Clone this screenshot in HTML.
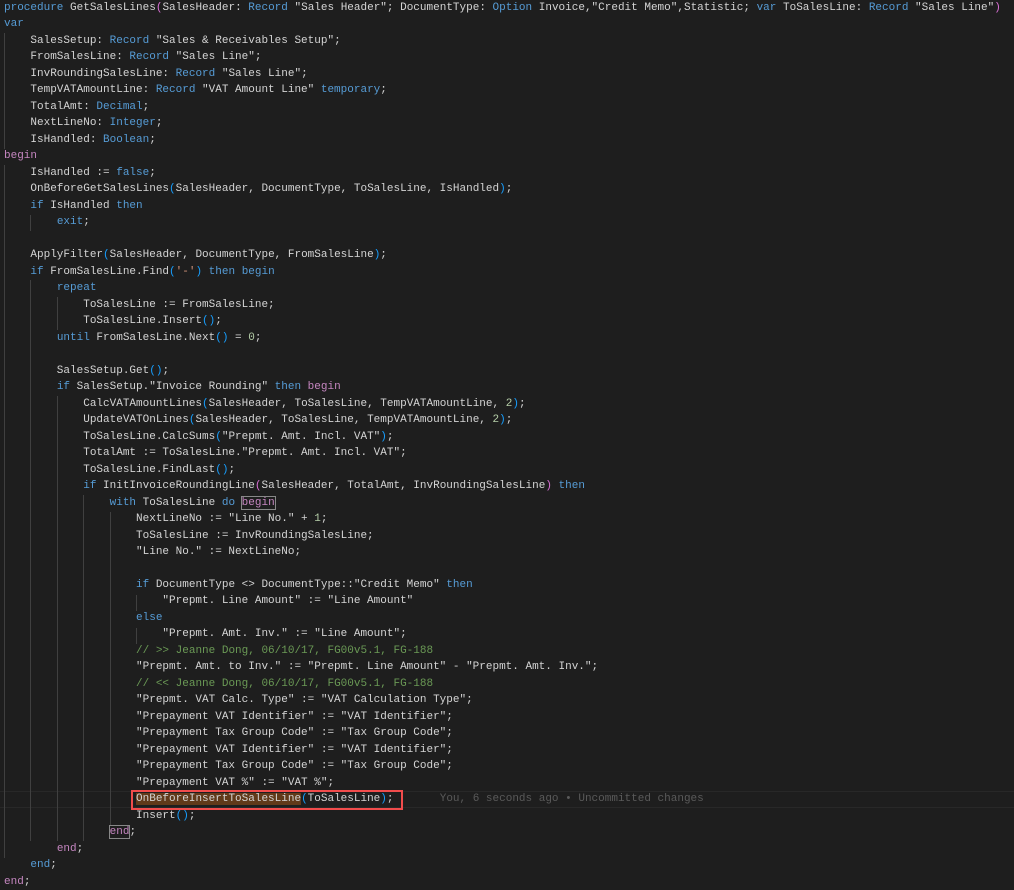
<!DOCTYPE html>
<html><head><meta charset="utf-8"><style>
html,body{margin:0;padding:0;background:#1e1e1e;width:1014px;height:890px;overflow:hidden}
pre{margin:0;position:absolute;left:4px;top:0;font-family:"Liberation Mono",monospace;font-size:11px;line-height:16.49px;color:#d4d4d4;white-space:pre}
.k{color:#569cd6}.p{color:#c586c0}.s{color:#ce9178}.n{color:#b5cea8}.c{color:#6a9955}.b{color:#179fff}.m{color:#da70d6}
.g{position:absolute;width:1px;background:#404040}
.cur{position:absolute;left:0;width:1014px;top:791px;height:17px;border-top:1px solid #282828;border-bottom:1px solid #282828;box-sizing:border-box}
.blame{color:#5a5a5a}
.hl{background:#613a1a}
.box{position:absolute;left:131px;top:790px;width:272px;height:20px;border:2px solid #f14c4c;box-sizing:border-box}
.bm{outline:1px solid #888}
</style></head><body>
<div class="cur"></div>
<div class="g" style="left:4px;top:33px;height:116px"></div>
<div class="g" style="left:4px;top:165px;height:693px"></div>
<div class="g" style="left:30px;top:215px;height:16px"></div>
<div class="g" style="left:30px;top:280px;height:561px"></div>
<div class="g" style="left:57px;top:297px;height:33px"></div>
<div class="g" style="left:57px;top:396px;height:445px"></div>
<div class="g" style="left:83px;top:495px;height:346px"></div>
<div class="g" style="left:110px;top:512px;height:313px"></div>
<div class="g" style="left:136px;top:595px;height:16px"></div>
<div class="g" style="left:136px;top:628px;height:16px"></div>
<pre><span class="k">procedure</span> GetSalesLines<span class="m">(</span>SalesHeader: <span class="k">Record</span> "Sales Header"; DocumentType: <span class="k">Option</span> Invoice,"Credit Memo",Statistic; <span class="k">var</span> ToSalesLine: <span class="k">Record</span> "Sales Line"<span class="m">)</span>
<span class="k">var</span>
    SalesSetup: <span class="k">Record</span> "Sales &amp; Receivables Setup";
    FromSalesLine: <span class="k">Record</span> "Sales Line";
    InvRoundingSalesLine: <span class="k">Record</span> "Sales Line";
    TempVATAmountLine: <span class="k">Record</span> "VAT Amount Line" <span class="k">temporary</span>;
    TotalAmt: <span class="k">Decimal</span>;
    NextLineNo: <span class="k">Integer</span>;
    IsHandled: <span class="k">Boolean</span>;
<span class="p">begin</span>
    IsHandled := <span class="k">false</span>;
    OnBeforeGetSalesLines<span class="b">(</span>SalesHeader, DocumentType, ToSalesLine, IsHandled<span class="b">)</span>;
    <span class="k">if</span> IsHandled <span class="k">then</span>
        <span class="k">exit</span>;

    ApplyFilter<span class="b">(</span>SalesHeader, DocumentType, FromSalesLine<span class="b">)</span>;
    <span class="k">if</span> FromSalesLine.Find<span class="b">(</span><span class="s">'-'</span><span class="b">)</span> <span class="k">then</span> <span class="k">begin</span>
        <span class="k">repeat</span>
            ToSalesLine := FromSalesLine;
            ToSalesLine.Insert<span class="b">()</span>;
        <span class="k">until</span> FromSalesLine.Next<span class="b">()</span> = <span class="n">0</span>;

        SalesSetup.Get<span class="b">()</span>;
        <span class="k">if</span> SalesSetup."Invoice Rounding" <span class="k">then</span> <span class="p">begin</span>
            CalcVATAmountLines<span class="b">(</span>SalesHeader, ToSalesLine, TempVATAmountLine, <span class="n">2</span><span class="b">)</span>;
            UpdateVATOnLines<span class="b">(</span>SalesHeader, ToSalesLine, TempVATAmountLine, <span class="n">2</span><span class="b">)</span>;
            ToSalesLine.CalcSums<span class="b">(</span>"Prepmt. Amt. Incl. VAT"<span class="b">)</span>;
            TotalAmt := ToSalesLine."Prepmt. Amt. Incl. VAT";
            ToSalesLine.FindLast<span class="b">()</span>;
            <span class="k">if</span> InitInvoiceRoundingLine<span class="m">(</span>SalesHeader, TotalAmt, InvRoundingSalesLine<span class="m">)</span> <span class="k">then</span>
                <span class="k">with</span> ToSalesLine <span class="k">do</span> <span class="p bm">begin</span>
                    NextLineNo := "Line No." + <span class="n">1</span>;
                    ToSalesLine := InvRoundingSalesLine;
                    "Line No." := NextLineNo;

                    <span class="k">if</span> DocumentType &lt;&gt; DocumentType::"Credit Memo" <span class="k">then</span>
                        "Prepmt. Line Amount" := "Line Amount"
                    <span class="k">else</span>
                        "Prepmt. Amt. Inv." := "Line Amount";
                    <span class="c">// &gt;&gt; Jeanne Dong, 06/10/17, FG00v5.1, FG-188</span>
                    "Prepmt. Amt. to Inv." := "Prepmt. Line Amount" - "Prepmt. Amt. Inv.";
                    <span class="c">// &lt;&lt; Jeanne Dong, 06/10/17, FG00v5.1, FG-188</span>
                    "Prepmt. VAT Calc. Type" := "VAT Calculation Type";
                    "Prepayment VAT Identifier" := "VAT Identifier";
                    "Prepayment Tax Group Code" := "Tax Group Code";
                    "Prepayment VAT Identifier" := "VAT Identifier";
                    "Prepayment Tax Group Code" := "Tax Group Code";
                    "Prepayment VAT %" := "VAT %";
                    <span class="hl">OnBeforeInsertToSalesLine</span><span class="b">(</span>ToSalesLine<span class="b">)</span>;       <span class="blame">You, 6 seconds ago • Uncommitted changes</span>
                    Insert<span class="b">()</span>;
                <span class="p bm">end</span>;
        <span class="p">end</span>;
    <span class="k">end</span>;
<span class="p">end</span>;</pre>
<div class="box"></div>
</body></html>
